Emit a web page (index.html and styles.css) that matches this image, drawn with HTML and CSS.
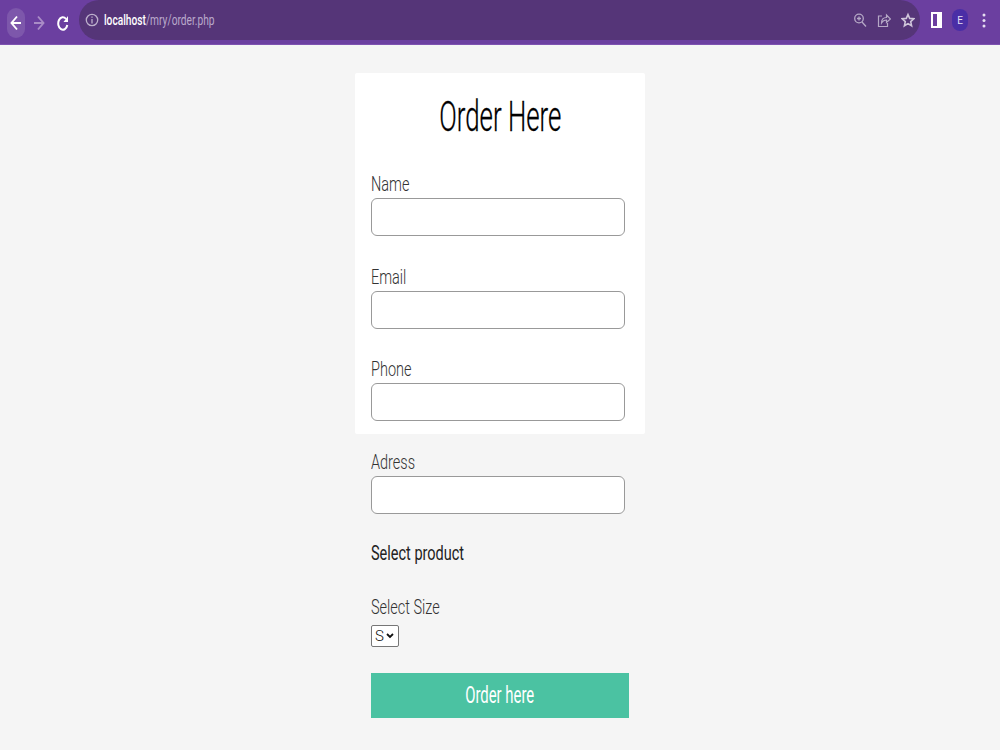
FILE: index.html
```html
<!DOCTYPE html>
<html lang="en">
<head>
<meta charset="utf-8">
<title>Order Here</title>
<link rel="stylesheet" href="styles.css">
</head>
<body>
<header class="toolbar">
  <div class="nav">
    <span class="nav-btn active"><svg width="12" height="18" viewBox="0 0 12 18"><path d="M11 9H2M7 2.500 1.500 9 7 15.500" fill="none" stroke="#fff" stroke-width="1.900"/></svg></span>
    <span class="nav-btn"><svg width="12" height="18" viewBox="0 0 12 18"><path d="M1 9h9M5 2.500 10.500 9 5 15.500" fill="none" stroke="#a98cc6" stroke-width="1.900"/></svg></span>
    <span class="nav-btn"><svg width="12" height="18" viewBox="0 0 12 18"><path d="M10.300 11A4.600 6.200 0 1 1 9 5" fill="none" stroke="#fff" stroke-width="2"/><path d="M6.500 8H11V2z" fill="#fff"/></svg></span>
  </div>
  <div class="omnibox">
    <svg class="info" width="14" height="14" viewBox="0 0 14 14"><circle cx="7" cy="7" r="5.700" fill="none" stroke="#bdb0cc" stroke-width="1.300"/><path d="M7 6v4.500M7 3.500v1.300" stroke="#bdb0cc" stroke-width="1.300"/></svg>
    <span class="url"><b>localhost</b>/mry/order.php</span>
    <span class="omni-icons">
      <svg width="14" height="16" viewBox="0 0 14 16"><circle cx="6" cy="6.500" r="4.300" fill="none" stroke="#b5a8c6" stroke-width="1.300"/><path d="M9 10l4 4.500M4 6.500h4M6 4.500v4" stroke="#b5a8c6" stroke-width="1.300"/></svg>
      <svg width="14" height="16" viewBox="0 0 14 16"><path d="M5 4H1.500v10.500h9V11" fill="none" stroke="#b5a8c6" stroke-width="1.200"/><path d="M4.500 11c0-4 2.500-5.500 5-5.500V3l4 4-4 3.500V8c-2 0-3.500.5-5 3z" fill="none" stroke="#b5a8c6" stroke-width="1.200"/></svg>
      <svg width="14" height="16" viewBox="0 0 14 16"><path d="M7 2.500l1.700 3.900 4.100.4-3.100 2.800.9 4.200L7 11.600l-3.600 2.200.9-4.200-3.100-2.800 4.100-.4z" fill="none" stroke="#cfc5da" stroke-width="1.600"/></svg>
    </span>
  </div>
  <div class="actions">
    <svg width="11" height="16" viewBox="0 0 11 16"><path fill-rule="evenodd" d="M0 0h11v16H0zM2 2v12h4V2z" fill="#fff"/></svg>
    <span class="avatar">E</span>
    <svg width="4" height="15" viewBox="0 0 4 15"><circle cx="2" cy="2" r="1.500" fill="#e6dff0"/><circle cx="2" cy="7.500" r="1.500" fill="#e6dff0"/><circle cx="2" cy="13" r="1.500" fill="#e6dff0"/></svg>
  </div>
</header>
<main class="page">
  <section class="card">
    <h1 class="title"><span class="title-text">Order Here</span></h1>
    <form class="form">
      <div class="field"><label class="label"><span class="squeeze">Name</span></label><input class="input" type="text"></div>
      <div class="field"><label class="label"><span class="squeeze">Email</span></label><input class="input" type="text"></div>
      <div class="field"><label class="label"><span class="squeeze">Phone</span></label><input class="input" type="text"></div>
      <div class="field"><label class="label"><span class="squeeze">Adress</span></label><input class="input" type="text"></div>
      <div class="product"><span class="squeeze">Select product</span></div>
      <div class="size">
        <label class="label"><span class="squeeze">Select Size</span></label>
        <span class="select-wrap">
          <select class="select"><option>S</option></select>
          <svg class="chevron" width="8" height="6" viewBox="0 0 8 6"><path d="M1 1l3 3 3-3" fill="none" stroke="#111" stroke-width="1.800"/></svg>
        </span>
      </div>
      <button class="submit" type="button"><span class="submit-text">Order here</span></button>
    </form>
  </section>
</main>
</body>
</html>
```
FILE: styles.css
```css
* { box-sizing: border-box; }
html, body { margin: 0; height: 100%; overflow: hidden; }
body { background: #f5f5f5; font-family: Roboto, "Liberation Sans", sans-serif; color: #333; }

.toolbar {
  height: 45px;
  display: flex;
  background: #6b3fa0;
  box-shadow: inset 0 -1px 0 #7d52b0;
}
.nav { width: 79px; display: flex; align-items: center; padding: 0 0 0 7px; }
.nav-btn { width: 24px; height: 30px; display: flex; align-items: center; justify-content: center; border-radius: 15px; }
.nav-btn.active { background: #7d57ab; width: 18px; margin-right: 2px; }
.omnibox {
  width: 841px;
  height: 40px;
  background: #553578;
  border-radius: 20px;
  display: flex;
  align-items: center;
  padding: 0 5px 0 6px;
}
.info { margin-right: 5px; }
.url { font-size: 15px; color: #b9a9cb; display: inline-block; transform: scaleX(.68); transform-origin: left center; white-space: nowrap; }
.url b { color: #fff; font-weight: 500; }
.omni-icons { margin-left: auto; display: flex; gap: 10px; align-items: center; }
.actions { flex: 1; display: flex; align-items: center; height: 40px; padding-left: 11px; }
.avatar {
  width: 16px; height: 22px; margin-left: 10px; margin-right: 14px;
  border-radius: 11px / 11px; background: #4a2ea6; color: #e6dff5;
  font-size: 10px; display: flex; align-items: center; justify-content: center;
}

.page { display: flex; justify-content: center; padding-top: 28px; }
.card {
  width: 290px;
  height: 361px;
  background: #fff;
  padding: 19px 16px 0;
  border-radius: 2px;
}
.title {
  margin: 0 0 30px;
  height: 50px;
  font-size: 42px;
  line-height: 50px;
  font-weight: 300;
  color: #000;
  text-align: center;
  -webkit-text-stroke: .3px #000;
}
.title-text { display: inline-block; transform: scaleX(.615); transform-origin: center; white-space: nowrap; }
.squeeze { display: inline-block; transform: scaleX(.69); transform-origin: left center; white-space: nowrap; }
.field { height: 92.700px; }
.label { display: block; height: 26px; font-size: 21px; line-height: 24px; font-weight: 300; color: #333; }
.input {
  display: block;
  width: 254px;
  height: 38px;
  background: #fff;
  border: 1px solid #999;
  border-radius: 6px;
}
.product { height: 52px; font-size: 21px; line-height: 20px; color: #222; }
.size { height: 78px; }
.select-wrap { display: block; position: relative; width: 28px; height: 22px; margin-top: 4px; }
.select {
  display: block;
  appearance: none;
  width: 28px;
  height: 22px;
  padding: 0 0 0 3px;
  font-family: Roboto, sans-serif;
  font-size: 15px;
  font-weight: 300;
  background: #fff;
  color: #111;
  border: 1px solid #767676;
  border-radius: 2px;
}
.chevron { position: absolute; right: 5px; top: 8px; }
.submit {
  display: block;
  width: 258px;
  height: 45px;
  background: #4bc2a2;
  border: 0;
  color: #fff;
  font-family: Roboto, sans-serif;
  font-size: 24px;
  font-weight: 400;
  text-align: center;
  padding: 0;
}
.submit-text { display: inline-block; transform: scaleX(.62); transform-origin: center; white-space: nowrap; }
```
